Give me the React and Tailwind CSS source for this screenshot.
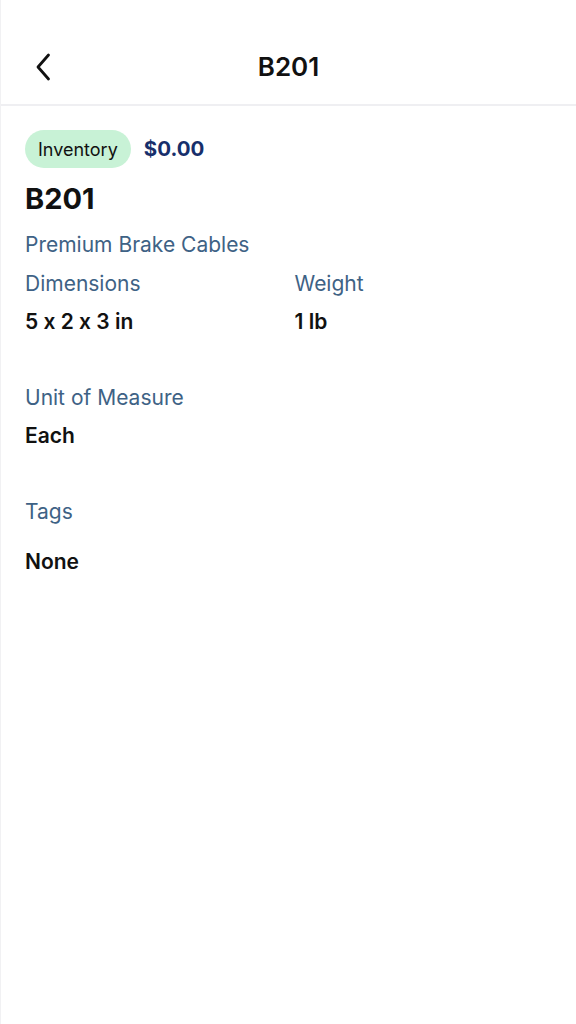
import React from 'react';

const Field = ({ label, value, className = '' }) => (
    <div className={className}>
        <div className="text-[21px] leading-[28px] text-[#3e6285]">{label}</div>
        <div className="mt-[12px] text-[21px] leading-[24px] font-semibold text-[#111]">{value}</div>
    </div>
);

const App = () => {
    return (
        <div
            className="min-h-[1024px] w-[576px] bg-white border-l border-[#f1f1f3] [font-feature-settings:'calt'_0]"
            style={{ fontFamily: 'Inter, "Noto Sans", sans-serif' }}
        >
            <header className="h-[106px] border-b-2 border-[#efeff2] relative pt-[51px]">
                <button className="absolute left-[28px] top-[47px] p-1">
                    <svg width="20" height="32" viewBox="0 0 20 32" fill="none">
                        <path
                            d="M15.5 4 L5 16 L15.5 28"
                            stroke="#111"
                            strokeWidth="2.8"
                            strokeLinecap="round"
                            strokeLinejoin="round"
                        />
                    </svg>
                </button>
                <h1 className="w-full text-center text-[26px] leading-[32px] font-semibold text-[#111]">B201</h1>
            </header>

            <main className="px-[24px] pt-[24px]">
                <div className="flex items-center gap-[13px]">
                    <span className="h-[38px] px-[13px] rounded-full bg-[#c8f2d6] flex items-center text-[18px] text-[#111]">
                        Inventory
                    </span>
                    <span className="text-[20.5px] font-bold text-[#172f6b]">$0.00</span>
                </div>

                <h2 className="mt-[12px] text-[29px] leading-[38px] font-bold text-[#111]">B201</h2>

                <p className="mt-[13px] text-[21px] leading-[28px] text-[#3e6285]">Premium Brake Cables</p>

                <div className="mt-[11px] grid grid-cols-2">
                    <Field label="Dimensions" value="5 x 2 x 3 in" />
                    <Field label="Weight" value="1 lb" className="pl-[6px]" />
                </div>

                <Field label="Unit of Measure" value="Each" className="mt-[50px]" />

                <div className="mt-[50px]">
                    <div className="text-[21px] leading-[28px] text-[#3e6285]">Tags</div>
                    <div className="mt-[24px] text-[21px] leading-[24px] font-semibold text-[#111]">None</div>
                </div>
            </main>
        </div>
    );
};

export default App;
